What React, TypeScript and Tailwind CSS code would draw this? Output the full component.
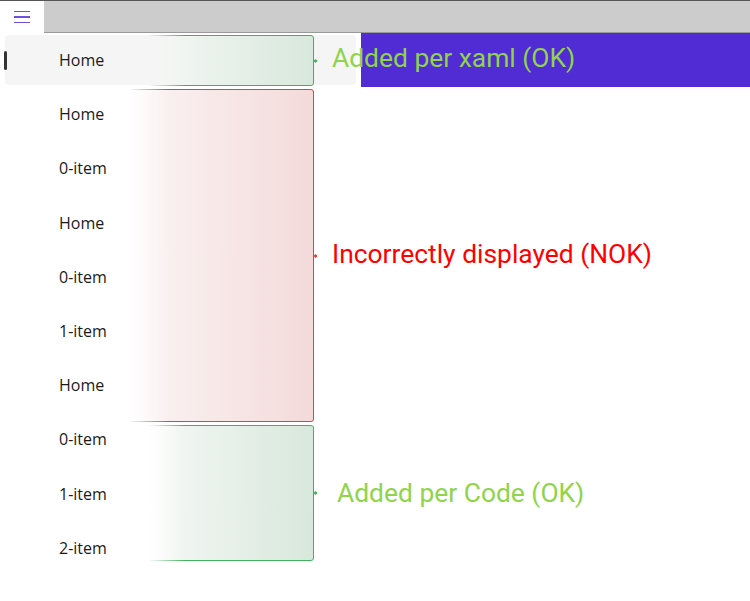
import React from 'react'

const items = ['Home', 'Home', '0-item', 'Home', '0-item', '1-item', 'Home', '0-item', '1-item', '2-item']

function Bracket({ top, left, height, kind }: { top: number; left: number; height: number; kind: 'ok' | 'nok' }) {
  const ok = kind === 'ok'
  return (
    <div className="absolute" style={{ top, left, height, width: 314 - left }}>
      <div
        className={`h-full w-full rounded-r-[3px] border-y-[1.5px] border-r-[1.5px] shadow-[0_0_4px_rgba(0,0,0,0.12)] [mask-image:linear-gradient(to_right,transparent,black_22%)] ${
          ok
            ? 'border-[#3fb35c] bg-gradient-to-r from-[#f6f8f6] to-[#d8e8dc]'
            : 'border-[#ee3a3a] bg-gradient-to-r from-[#fbf5f5] to-[#f4dada]'
        }`}
      />
      <div
        className={`absolute right-[-3px] top-1/2 h-[3px] w-[3px] -translate-y-1/2 rotate-45 ${ok ? 'bg-[#3fb35c]' : 'bg-[#ee3a3a]'}`}
      />
    </div>
  )
}

export default function App() {
  return (
    <div className="relative h-[601px] w-[750px] overflow-hidden bg-white font-['Open_Sans',sans-serif]">
      {/* title bar */}
      <div className="flex h-[33px] border-t border-[#555]">
        <div className="flex w-[44px] items-center justify-center rounded-tl-[4px] bg-white">
          <div className="flex w-[16px] flex-col gap-[4px]">
            <span className="h-[1.5px] w-full bg-[#6f4fe0]" />
            <span className="h-[1.5px] w-full bg-[#6f4fe0]" />
            <span className="h-[1.5px] w-full bg-[#6f4fe0]" />
          </div>
        </div>
        <div className="flex-1 border-b border-[#999] bg-[#cccccc]" />
      </div>

      <div className="flex">
        {/* navigation pane */}
        <nav className="w-[361px]">
          {items.map((label, i) => (
            <div key={i} className="h-[54.2px] px-[5px] py-[2px]">
              <div
                className={`relative flex h-full items-center rounded-[4px] pl-[54px] text-[16px] text-[#1b1b1b] ${
                  i === 0 ? 'bg-[#f5f5f5]' : ''
                }`}
              >
                {i === 0 && <span className="absolute left-[-1px] top-[16px] h-[19px] w-[3px] rounded-full bg-[#333]" />}
                {label}
              </div>
            </div>
          ))}
        </nav>
        <div className="flex-1">
          <div className="h-[54px] bg-[#512bd4]" />
        </div>
      </div>

      {/* annotations */}
      <Bracket top={35} left={148} height={51} kind="ok" />
      <Bracket top={89} left={128} height={333} kind="nok" />
      <Bracket top={425} left={148} height={136} kind="ok" />

      <div className="absolute left-[332px] top-[41px] font-['Roboto',sans-serif] text-[26.4px] leading-[34px] text-[#8fd44a]">
        Added per xaml (OK)
      </div>
      <div className="absolute left-[332px] top-[237px] font-['Roboto',sans-serif] text-[26.4px] leading-[34px] text-[#ff0000]">
        Incorrectly displayed (NOK)
      </div>
      <div className="absolute left-[337px] top-[476px] font-['Roboto',sans-serif] text-[26.4px] leading-[34px] text-[#8fd44a]">
        Added per Code (OK)
      </div>
    </div>
  )
}
